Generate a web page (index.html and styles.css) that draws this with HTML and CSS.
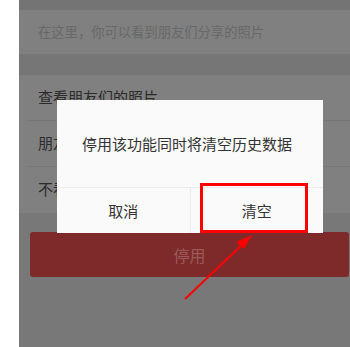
FILE: index.html
```html
<!DOCTYPE html>
<html lang="zh-CN">
<head>
  <meta charset="UTF-8">
  <meta name="viewport" content="width=device-width, initial-scale=1.0">
  <title>停用</title>
  <link rel="stylesheet" href="styles.css">
</head>
<body>
  <div class="page">
    <div class="side"></div>
    <div class="screen">
      <div class="band"></div>
      <div class="intro">在这里，你可以看到朋友们分享的照片</div>
      <div class="gap"></div>
      <div class="list">
        <div class="row">查看朋友们的照片</div>
        <div class="row">朋友</div>
        <div class="row">不看</div>
      </div>
      <div class="action">
        <button class="stop">停用</button>
      </div>

      <div class="dialog">
        <p class="msg">停用该功能同时将清空历史数据</p>
        <div class="btns">
          <span class="btn">取消</span>
          <span class="btn">清空</span>
        </div>
      </div>
    </div>
  </div>

  <!-- 标注：红框和箭头 -->
  <div class="mark"></div>
  <svg class="arrow" width="350" height="347" viewBox="0 0 350 347">
    <line x1="185" y1="299" x2="246" y2="241" stroke="#f00" stroke-width="2"/>
    <polygon points="252,235 236,242 244,249" fill="#f00"/>
  </svg>
</body>
</html>
```

FILE: styles.css
```css
body {
  margin: 0;
  font-family: "Noto Sans CJK SC", "Noto Sans", sans-serif;
  background: #fff;
}

.page {
  display: flex;
  height: 347px;
}

.side {
  width: 19px;
  background: #fff;
}

.screen {
  flex: 1;
  position: relative;
  background: #787878;
}

.band {
  height: 10px;
  background: #747474;
}

.intro {
  height: 44px;
  line-height: 44px;
  padding-left: 19px;
  background: #808080;
  color: #686868;
  font-size: 13.3px;
}

.gap {
  height: 21px;
  background: #767676;
}

.list {
  background: #808080;
}

.list .row {
  height: 45px;
  line-height: 44px;
  margin-left: 8px;
  padding-left: 11px;
  border-bottom: 1px solid #767676;
  color: #2b2b2b;
  font-size: 15px;
}

.list .row:last-child {
  height: 46px;
  border-bottom: none;
}

.action {
  padding: 19px 1px 0 11px;
}

.stop {
  display: block;
  width: 100%;
  height: 45px;
  border: none;
  border-radius: 3px;
  background: #7e2a2a;
  color: #9a5a5a;
  font-family: inherit;
  font-size: 16px;
}

.dialog {
  position: absolute;
  left: 38px;
  top: 100px;
  width: 266px;
  height: 133px;
  background: #fafafa;
  display: flex;
  flex-direction: column;
}

.dialog .msg {
  margin: 0;
  height: 87px;
  line-height: 87px;
  text-align: center;
  color: #333;
  font-size: 15px;
  padding-right: 6px;
}

.dialog .btns {
  flex: 1;
  display: flex;
  border-top: 1px solid #ececec;
}

.dialog .btn {
  flex: 1;
  display: flex;
  align-items: center;
  justify-content: center;
  color: #333;
  font-size: 15px;
}

.dialog .btn + .btn {
  border-left: 1px solid #ececec;
}

.mark {
  position: absolute;
  left: 200px;
  top: 183px;
  width: 102px;
  height: 44px;
  border: 3px solid #f00;
}

.arrow {
  position: absolute;
  left: 0;
  top: 0;
}
```
